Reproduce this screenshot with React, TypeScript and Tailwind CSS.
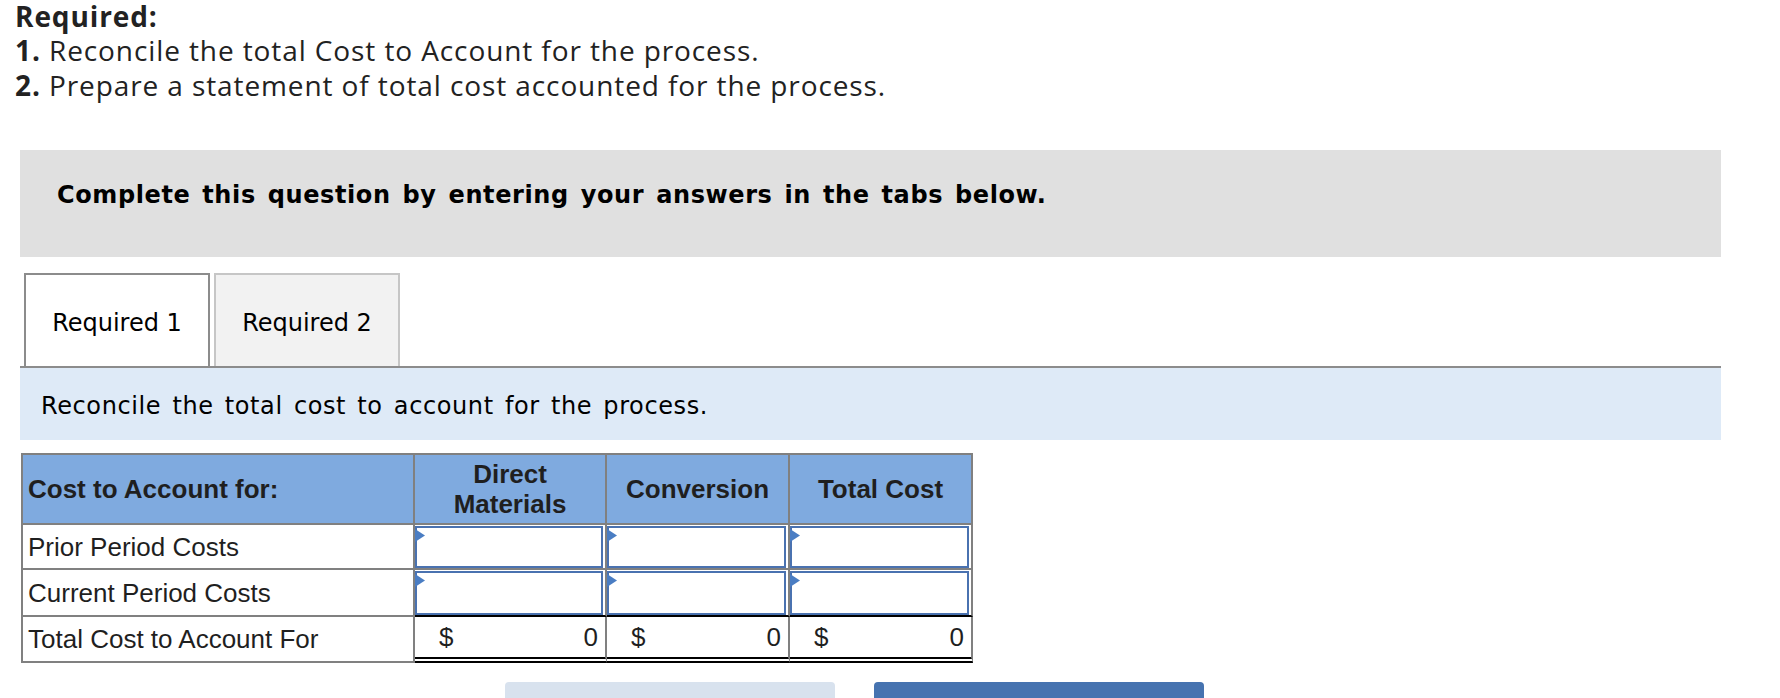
import type { ReactNode } from 'react';

const headFont = { fontFamily: '"Open Sans", Lato, sans-serif' };
const verdana = { fontFamily: '"DejaVu Sans", Verdana, sans-serif' };
const arial = { fontFamily: '"Liberation Sans", Arial, sans-serif' };

function InputCell({ bottom }: { bottom: string }) {
  return (
    <div className={`border-r-2 border-r-[#808080] ${bottom} pt-[1px] pr-[2px]`}>
      <div className="relative h-full border-2 border-[#4a72b0] bg-white">
        <svg className="absolute -left-[2px] top-[1px]" width="10" height="13" viewBox="0 0 10 13">
          <polygon points="0,0 10,6.5 0,13" fill="#4a7dc3" />
        </svg>
      </div>
    </div>
  );
}

function HeadCell({ children, left }: { children: ReactNode; left?: boolean }) {
  return (
    <div
      className={`flex items-center border-r-2 border-b-2 border-[#808080] bg-[#7faadf] text-[26px] font-bold leading-[30px] text-[#1f1f1f] ${
        left ? 'justify-start pl-[5px]' : 'justify-center text-center'
      }`}
    >
      {children}
    </div>
  );
}

function LabelCell({ children }: { children: ReactNode }) {
  return (
    <div className="flex items-center border-r-2 border-b-2 border-[#808080] pl-[5px] text-[26px] leading-[30px] text-[#1f1f1f]">
      {children}
    </div>
  );
}

function TotalCell() {
  return (
    <div className="flex items-center justify-between border-r-2 border-b-[6px] border-double border-r-[#808080] border-b-black pl-[24px] pr-[7px] text-[26px] leading-[30px] text-[#1f1f1f]">
      <span>$</span>
      <span>0</span>
    </div>
  );
}

export default function App() {
  return (
    <div className="min-h-[698px] w-[1780px] overflow-hidden bg-white">
      <div className="pl-[15px] text-[28px] tracking-[0.9px] text-[#222]" style={headFont}>
        <div className="h-[33px] font-bold leading-[32px]">Required:</div>
        <div className="leading-[35px]">
          <span className="font-bold">1.</span> Reconcile the total Cost to Account for the process.
        </div>
        <div className="leading-[35px]">
          <span className="font-bold">2.</span> Prepare a statement of total cost accounted for the process.
        </div>
      </div>

      <div className="pl-[20px]">
        <div className="mt-[47px] h-[107px] w-[1701px] bg-[#e0e0e0] pl-[37px] pt-[31px]">
          <p
            className="text-[24px] font-bold leading-[28px] tracking-[0.6px] text-black [word-spacing:3px]"
            style={verdana}
          >
            Complete this question by entering your answers in the tabs below.
          </p>
        </div>

        <div className="mt-[16px] w-[1701px]">
          <div className="flex gap-[4px] pl-[4px]" style={verdana}>
            <div className="h-[93px] w-[186px] border-2 border-b-0 border-[#8c8c8c] bg-white pt-[34px] text-center text-[24px] leading-[28px] text-black">
              Required 1
            </div>
            <div className="h-[93px] w-[186px] border-2 border-b-0 border-[#c6c6c6] bg-[#f2f2f2] pt-[34px] text-center text-[24px] leading-[28px] text-black">
              Required 2
            </div>
          </div>
          <div className="h-[2px] bg-[#8c8c8c]" />
          <div className="h-[72px] bg-[#deeaf7] pl-[21px] pt-[24px]">
            <p className="text-[24px] leading-[28px] tracking-[0.6px] text-black [word-spacing:3px]" style={verdana}>
              Reconcile the total cost to account for the process.
            </p>
          </div>
        </div>

        <div
          className="ml-[1px] mt-[13px] grid w-[952px] grid-cols-[392px_192px_183px_183px] grid-rows-[70px_45px_47px_46px] border-l-2 border-t-2 border-[#808080]"
          style={arial}
        >
          <HeadCell left>Cost to Account for:</HeadCell>
          <HeadCell>
            Direct
            <br />
            Materials
          </HeadCell>
          <HeadCell>Conversion</HeadCell>
          <HeadCell>Total Cost</HeadCell>

          <LabelCell>Prior Period Costs</LabelCell>
          <InputCell bottom="border-b-2 border-b-[#808080]" />
          <InputCell bottom="border-b-2 border-b-[#808080]" />
          <InputCell bottom="border-b-2 border-b-[#808080]" />

          <LabelCell>Current Period Costs</LabelCell>
          <InputCell bottom="border-b-2 border-b-black" />
          <InputCell bottom="border-b-2 border-b-black" />
          <InputCell bottom="border-b-2 border-b-black" />

          <LabelCell>Total Cost to Account For</LabelCell>
          <TotalCell />
          <TotalCell />
          <TotalCell />
        </div>

        <div className="mt-[19px] flex h-[16px] gap-[39px] overflow-hidden pl-[485px]">
          <div className="h-[44px] w-[330px] rounded-[4px] bg-[#d8e2ee]" />
          <div className="h-[44px] w-[330px] rounded-[4px] bg-[#4673b0]" />
        </div>
      </div>
    </div>
  );
}
